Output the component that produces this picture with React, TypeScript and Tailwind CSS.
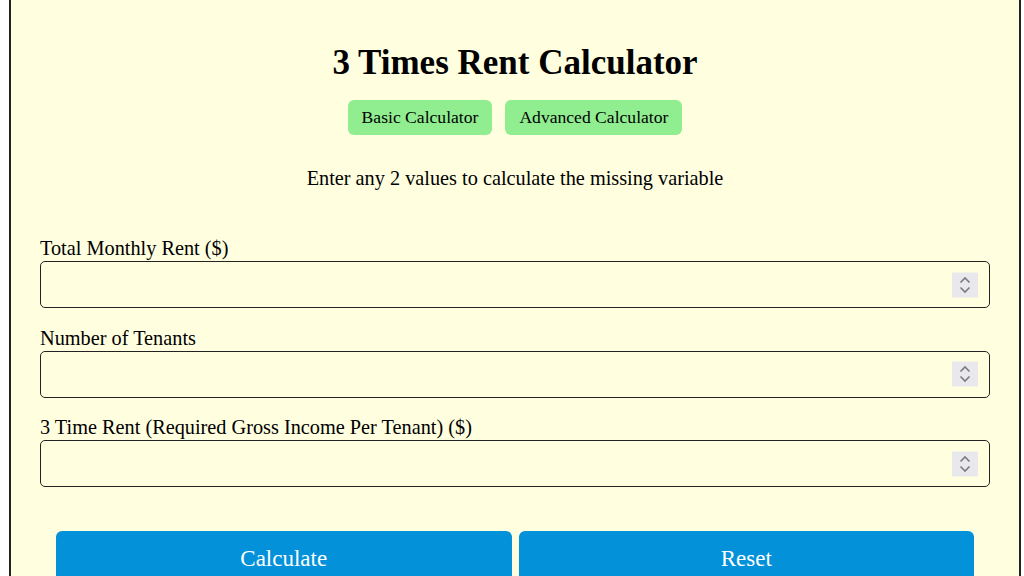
import { useState } from "react";

const fields = [
    { id: "rent", label: "Total Monthly Rent ($)" },
    { id: "tenants", label: "Number of Tenants" },
    { id: "income", label: "3 Time Rent (Required Gross Income Per Tenant) ($)" },
];

function Spinner() {
    return (
        <div className="pointer-events-none absolute right-[12px] top-1/2 flex h-[25px] w-[26px] -translate-y-1/2 flex-col items-center justify-center gap-[3px] bg-[#e9e9ed]">
            <svg width="12" height="7" viewBox="0 0 12 7" fill="none">
                <path d="M1.5 6 L6 1.5 L10.5 6" stroke="#7a7a80" strokeWidth="1.6" />
            </svg>
            <svg width="12" height="7" viewBox="0 0 12 7" fill="none">
                <path d="M1.5 1 L6 5.5 L10.5 1" stroke="#7a7a80" strokeWidth="1.6" />
            </svg>
        </div>
    );
}

export default function App() {
    const [values, setValues] = useState<Record<string, string>>({ rent: "", tenants: "", income: "" });

    return (
        <div className="min-h-screen bg-white font-['Liberation_Serif','Times_New_Roman',serif] text-black">
            <div className="ml-[9px] h-[576px] w-[1012px] overflow-hidden border-x-2 border-[#222] bg-[#ffffe0] px-[29px]">
                <h1 className="pt-[43px] text-center text-[35px] font-bold leading-[40px]">3 Times Rent Calculator</h1>

                <div className="mt-[17px] flex justify-center gap-[13px]">
                    <button className="h-[35px] rounded-[6px] bg-[#90ee90] px-[14px] text-[17.6px]">Basic Calculator</button>
                    <button className="h-[35px] rounded-[6px] bg-[#90ee90] px-[14px] text-[17.6px]">Advanced Calculator</button>
                </div>

                <p className="mt-[31px] text-center text-[20.3px] leading-[24px]">
                    Enter any 2 values to calculate the missing variable
                </p>

                <div className="mt-[46px] flex flex-col gap-[17.5px]">
                    {fields.map((f) => (
                        <div key={f.id}>
                            <label htmlFor={f.id} className="block text-[20.3px] leading-[24px]">{f.label}</label>
                            <div className="relative mt-[1px]">
                                <input
                                    id={f.id}
                                    type="text"
                                    value={values[f.id]}
                                    onChange={(e) => setValues({ ...values, [f.id]: e.target.value })}
                                    className="h-[47px] w-full rounded-[5px] border border-[#222] bg-transparent px-3 text-[18px] outline-none"
                                />
                                <Spinner />
                            </div>
                        </div>
                    ))}
                </div>

                <div className="mt-[43.5px] flex gap-[7px] px-[16px]">
                    <button className="h-[58px] flex-1 rounded-[6px] bg-[#0391da] text-[23px] text-white">Calculate</button>
                    <button className="h-[58px] flex-1 rounded-[6px] bg-[#0391da] text-[23px] text-white">Reset</button>
                </div>
            </div>
        </div>
    );
}
